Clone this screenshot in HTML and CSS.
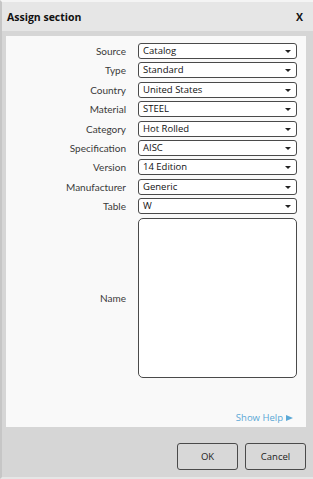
FILE: index.html
```html
<!DOCTYPE html>
<html>
<head>
    <title>Assign section</title>
    <link rel="stylesheet" href="styles.css">
</head>
<body>
<div class="dialog">
    <div class="titlebar">
        <span class="title">Assign section</span>
        <span class="close">X</span>
    </div>
    <div class="dialog-body">
        <div class="panel">
            <div class="form">
                <label>Source</label>
                <div class="combo">Catalog<span class="caret"></span></div>
                <label>Type</label>
                <div class="combo">Standard<span class="caret"></span></div>
                <label>Country</label>
                <div class="combo">United States<span class="caret"></span></div>
                <label>Material</label>
                <div class="combo">STEEL<span class="caret"></span></div>
                <label>Category</label>
                <div class="combo">Hot Rolled<span class="caret"></span></div>
                <label>Specification</label>
                <div class="combo">AISC<span class="caret"></span></div>
                <label>Version</label>
                <div class="combo">14 Edition<span class="caret"></span></div>
                <label>Manufacturer</label>
                <div class="combo">Generic<span class="caret"></span></div>
                <label>Table</label>
                <div class="combo">W<span class="caret"></span></div>
                <label>Name</label>
                <div class="name-box"></div>
            </div>
            <div class="help"><a>Show Help</a><span class="help-arrow"></span></div>
        </div>
        <div class="buttons">
            <button type="button">OK</button>
            <button type="button">Cancel</button>
        </div>
    </div>
</div>
</body>
</html>
```

FILE: styles.css
```css
html, body {
    margin: 0;
    padding: 0;
}
body {
    font-family: "Open Sans", sans-serif;
    font-size: 9.5px;
    color: #222;
    background-color: #d4d4d4;
}
.dialog {
    width: 313px;
    height: 479px;
    display: flex;
    flex-direction: column;
    box-sizing: border-box;
    border-top: 2px solid #f4f4f4;
    border-left: 2px solid #c6c6c6;
    border-bottom: 2px solid #e6e6e6;
}
.titlebar {
    height: 29px;
    background-color: #e6e6e6;
    display: flex;
    align-items: center;
    justify-content: space-between;
    padding: 0 10px 0 5px;
}
.title {
    font-weight: bold;
    font-size: 10.5px;
    color: #111;
}
.close {
    font-weight: bold;
    font-size: 10.5px;
    color: #111;
}
.dialog-body {
    flex: 1;
    display: flex;
    flex-direction: column;
    padding: 5px 7px 0 4px;
    background-color: #d6d6d6;
}
.panel {
    background-color: #f9f9f9;
    height: 391px;
    box-sizing: border-box;
    padding: 7px 9px 0 0;
    display: flex;
    flex-direction: column;
}
.form {
    display: grid;
    grid-template-columns: 120px 159px;
    grid-template-rows: repeat(9, 16px) 160px;
    column-gap: 12px;
    row-gap: 3.4px;
}
.form label {
    font-family: Lato, sans-serif;
    font-size: 10px;
    text-align: right;
    align-self: center;
    color: #3a3a3a;
}
.combo {
    position: relative;
    background-color: #fff;
    border: 1px solid #4a4a4a;
    border-radius: 3px;
    box-sizing: border-box;
    padding-left: 4px;
    line-height: 14px;
    color: #111;
}
.caret {
    position: absolute;
    right: 5px;
    top: 6px;
    width: 0;
    height: 0;
    border-left: 3px solid transparent;
    border-right: 3px solid transparent;
    border-top: 3px solid #222;
}
.name-box {
    background-color: #fff;
    border: 1px solid #4a4a4a;
    border-radius: 5px;
    box-sizing: border-box;
}
.help {
    margin-top: auto;
    margin-bottom: 3px;
    text-align: right;
    color: #5aa8d6;
    font-size: 9.5px;
    padding-right: 4px;
}
.help-arrow {
    display: inline-block;
    margin-left: 3px;
    width: 0;
    height: 0;
    border-top: 3px solid transparent;
    border-bottom: 3px solid transparent;
    border-left: 7px solid #5aa8d6;
}
.buttons {
    display: flex;
    justify-content: flex-end;
    gap: 7px;
    padding-top: 16px;
}
button {
    width: 61px;
    height: 27px;
    background-color: #d8d8d8;
    border: 1px solid #4a4a4a;
    border-radius: 3px;
    font-family: "Open Sans", sans-serif;
    font-size: 9.5px;
    color: #222;
    padding: 0;
}
```
